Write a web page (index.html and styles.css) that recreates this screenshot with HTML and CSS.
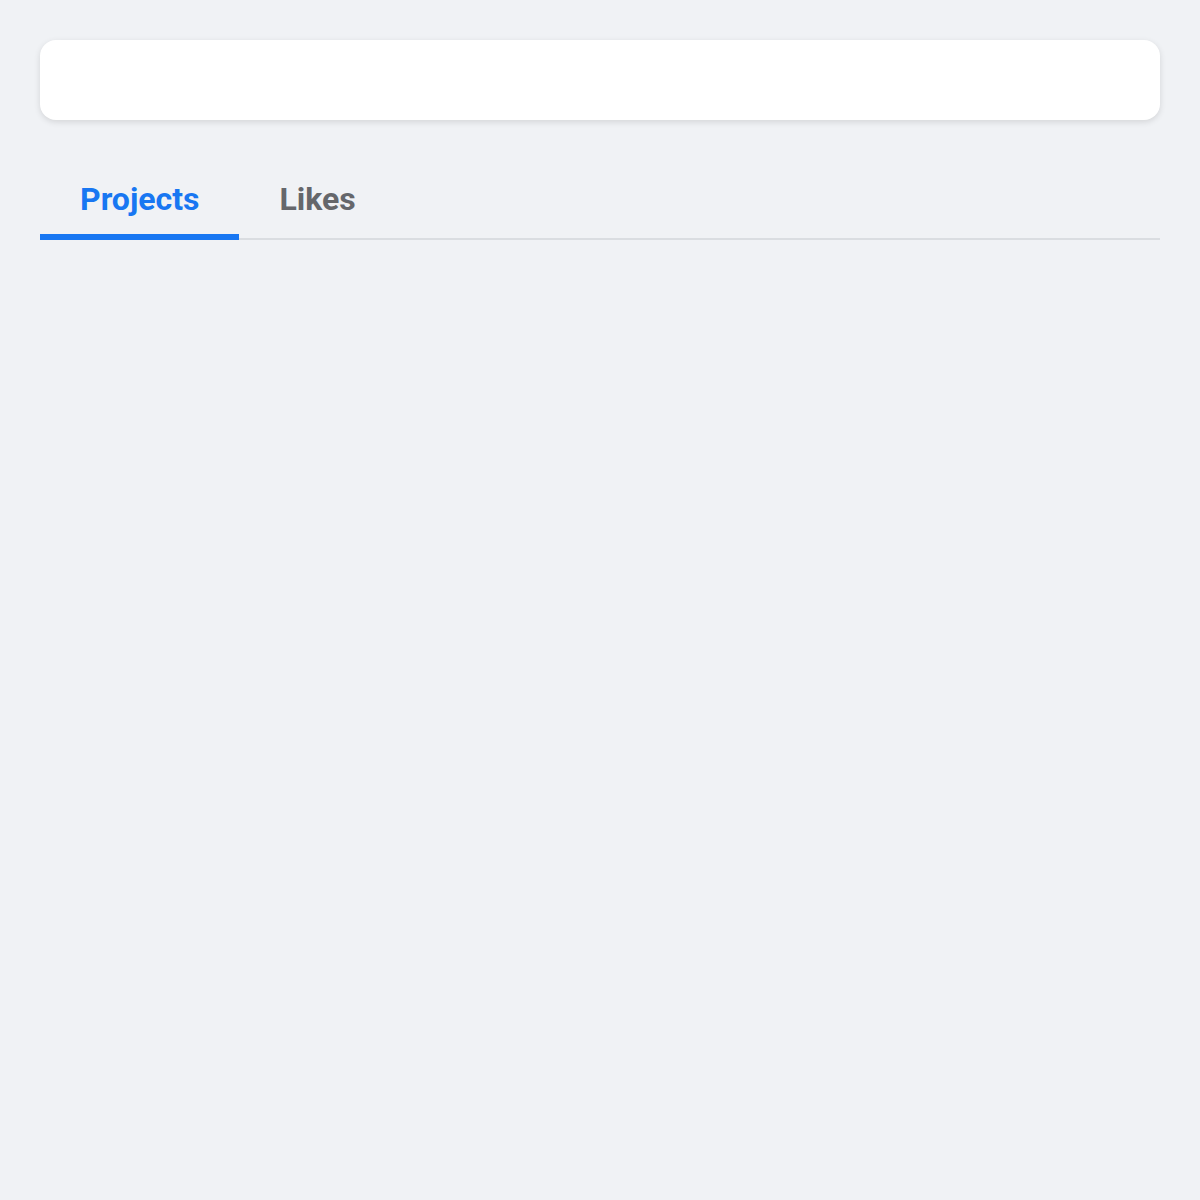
FILE: index.html
```html
<!DOCTYPE html>
<html lang="en">
<head>
<meta charset="utf-8">
<title>Profile</title>
<link rel="stylesheet" href="styles.css">
</head>
<body>
<main class="page">
  <section class="card"></section>
  <nav class="tabs">
    <a class="tab tab-active" href="#">Projects</a>
    <a class="tab" href="#">Likes</a>
  </nav>
</main>
</body>
</html>
```
FILE: styles.css
```css
html, body {
  margin: 0;
  padding: 0;
  background: #f0f2f5;
  font-family: Roboto, "Liberation Sans", Arial, sans-serif;
}
.page {
  padding: 40px;
  display: flex;
  flex-direction: column;
  gap: 40px;
}
.card {
  height: 80px;
  background: #ffffff;
  border-radius: 16px;
  box-shadow: 0 2px 6px rgba(0, 0, 0, 0.12);
}
.tabs {
  display: flex;
  border-bottom: 2px solid #dadde1;
}
.tab {
  position: relative;
  display: flex;
  align-items: center;
  justify-content: center;
  height: 78px;
  padding: 0 40px;
  font-size: 32px;
  font-weight: 700;
  color: #65676b;
  text-decoration: none;
  box-sizing: border-box;
}
.tab-active {
  color: #1877f2;
}
.tab-active::after {
  content: "";
  position: absolute;
  left: 0;
  right: 0;
  bottom: -2px;
  height: 6px;
  background: #1877f2;
}
```
